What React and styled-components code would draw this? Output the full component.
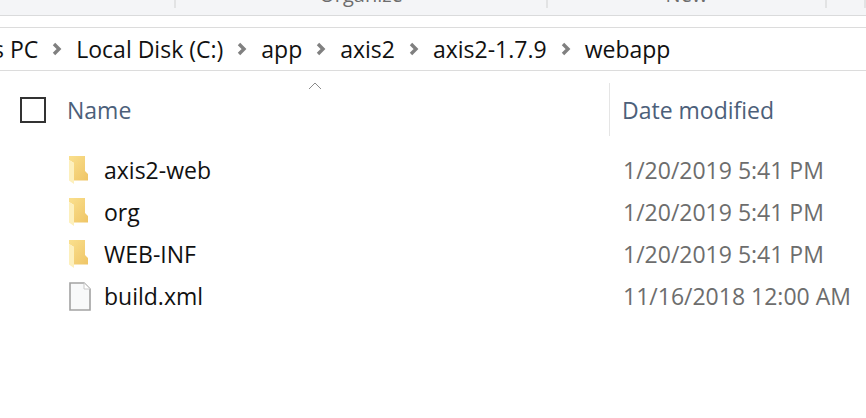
import styled, { createGlobalStyle } from 'styled-components';

const GlobalStyle = createGlobalStyle`
  html, body {
    margin: 0;
    padding: 0;
    background: #fff;
  }
  body {
    font-family: 'Open Sans', 'Noto Sans', sans-serif;
    overflow: hidden;
  }
`;

const crumbs = ['Local Disk (C:)', 'app', 'axis2', 'axis2-1.7.9', 'webapp'];

const files = [
  { name: 'axis2-web', date: '1/20/2019 5:41 PM', kind: 'folder' },
  { name: 'org', date: '1/20/2019 5:41 PM', kind: 'folder' },
  { name: 'WEB-INF', date: '1/20/2019 5:41 PM', kind: 'folder' },
  { name: 'build.xml', date: '11/16/2018 12:00 AM', kind: 'file' },
];

const FolderIcon = () => (
  <svg width="20" height="28" viewBox="0 0 20 28">
    <defs>
      <linearGradient id="folderBack" x1="0" y1="0" x2="1" y2="1">
        <stop offset="0" stopColor="#fae08e" />
        <stop offset="1" stopColor="#efc566" />
      </linearGradient>
    </defs>
    <path d="M0 0H16V15L19 18V24.5H5V7L0 4z" fill="url(#folderBack)" />
    <path d="M0 4L5 7V28L0 24.5z" fill="#fdf0bd" />
  </svg>
);

const FileIcon = () => (
  <svg width="22" height="29" viewBox="0 0 22 29">
    <path d="M1 1H15L21 7V28H1z" fill="#f8f9fa" stroke="#a2a2a2" strokeWidth="1.6" />
    <path d="M15 1V7H21" fill="#fff" stroke="#c8c8c8" />
  </svg>
);

const Chevron = () => (
  <svg width="10" height="14" viewBox="0 0 10 14">
    <path d="M2 2l5 5-5 5" fill="none" stroke="#808080" strokeWidth="3.4" />
  </svg>
);

const App = () => (
  <Window>
    <GlobalStyle />
    <Ribbon>
      <RibbonGroup width={176} />
      <RibbonGroup width={372}>
        <RibbonLabel>Organize</RibbonLabel>
      </RibbonGroup>
      <RibbonGroup width={279}>
        <RibbonLabel>New</RibbonLabel>
      </RibbonGroup>
      <RibbonGroup />
    </Ribbon>
    <AddressBar>
      <Crumb>s PC</Crumb>
      {crumbs.map((crumb) => (
        <CrumbItem key={crumb}>
          <Chevron />
          <Crumb>{crumb}</Crumb>
        </CrumbItem>
      ))}
    </AddressBar>
    <Header>
      <SortCaret>
        <svg width="14" height="8" viewBox="0 0 14 8">
          <path d="M1 7l6-6 6 6" fill="none" stroke="#8a8a8a" />
        </svg>
      </SortCaret>
      <NameHeader>
        <CheckBox />
        <HeaderLabel>Name</HeaderLabel>
      </NameHeader>
      <DateHeader>
        <HeaderLabel>Date modified</HeaderLabel>
      </DateHeader>
    </Header>
    <FileList>
      {files.map((file) => (
        <FileRow key={file.name}>
          <IconCell>{file.kind === 'folder' ? <FolderIcon /> : <FileIcon />}</IconCell>
          <FileName>{file.name}</FileName>
          <FileDate>{file.date}</FileDate>
        </FileRow>
      ))}
    </FileList>
  </Window>
);

/* **********
 *  STYLES  *
 ********* */

const Window = styled.div`
  width: 866px;
  height: 418px;
  overflow: hidden;
  background: #fff;
`;

const Ribbon = styled.div`
  display: flex;
  height: 15px;
  background: #f4f5f7;
  border-bottom: 1px solid #dadbdc;
`;

const RibbonGroup = styled.div`
  width: ${(props) => (props.width ? `${props.width}px` : 'auto')};
  flex: ${(props) => (props.width ? 'none' : 1)};
  height: 8px;
  border-right: 2px solid #e2e3e4;
  box-sizing: border-box;
  display: flex;
  align-items: flex-end;
  justify-content: center;
  overflow: hidden;
`;

const RibbonLabel = styled.div`
  line-height: 30px;
  margin-bottom: -2px;
  flex: none;
  font-size: 20px;
  color: #6d6d6d;
`;

const AddressBar = styled.div`
  display: flex;
  align-items: center;
  gap: 14px;
  height: 42px;
  margin-top: 11px;
  border-top: 1px solid #dcdcdc;
  border-bottom: 1px solid #dcdcdc;
  overflow: hidden;
`;

const CrumbItem = styled.div`
  display: flex;
  align-items: center;
  gap: 14px;
`;

const Crumb = styled.span`
  font-size: 23px;
  color: #111;
  white-space: nowrap;

  ${AddressBar} > &:first-child {
    margin-left: -7px;
  }
`;

const Header = styled.div`
  position: relative;
  display: flex;
  height: 53px;
  margin-top: 12px;
`;

const SortCaret = styled.div`
  position: absolute;
  left: 308px;
  top: -1px;
  line-height: 0;
`;

const NameHeader = styled.div`
  display: flex;
  align-items: center;
  width: 610px;
  padding-left: 20px;
  box-sizing: border-box;
  border-right: 1px solid #e5e5e5;
`;

const DateHeader = styled.div`
  display: flex;
  align-items: center;
  padding-left: 12px;
`;

const CheckBox = styled.div`
  width: 26px;
  height: 26px;
  border: 2px solid #333;
  box-sizing: border-box;
  margin-right: 21px;
`;

const HeaderLabel = styled.span`
  font-size: 23px;
  color: #4c607a;
`;

const FileList = styled.div`
  display: flex;
  flex-direction: column;
  margin-top: 13px;
`;

const FileRow = styled.div`
  display: flex;
  align-items: center;
  height: 42px;
`;

const IconCell = styled.div`
  width: 104px;
  padding-left: 69px;
  box-sizing: border-box;
  line-height: 0;
`;

const FileName = styled.div`
  width: 519px;
  font-size: 23px;
  color: #111;
`;

const FileDate = styled.div`
  font-size: 23px;
  color: #6d6d6d;
  white-space: nowrap;
`;

export default App;
